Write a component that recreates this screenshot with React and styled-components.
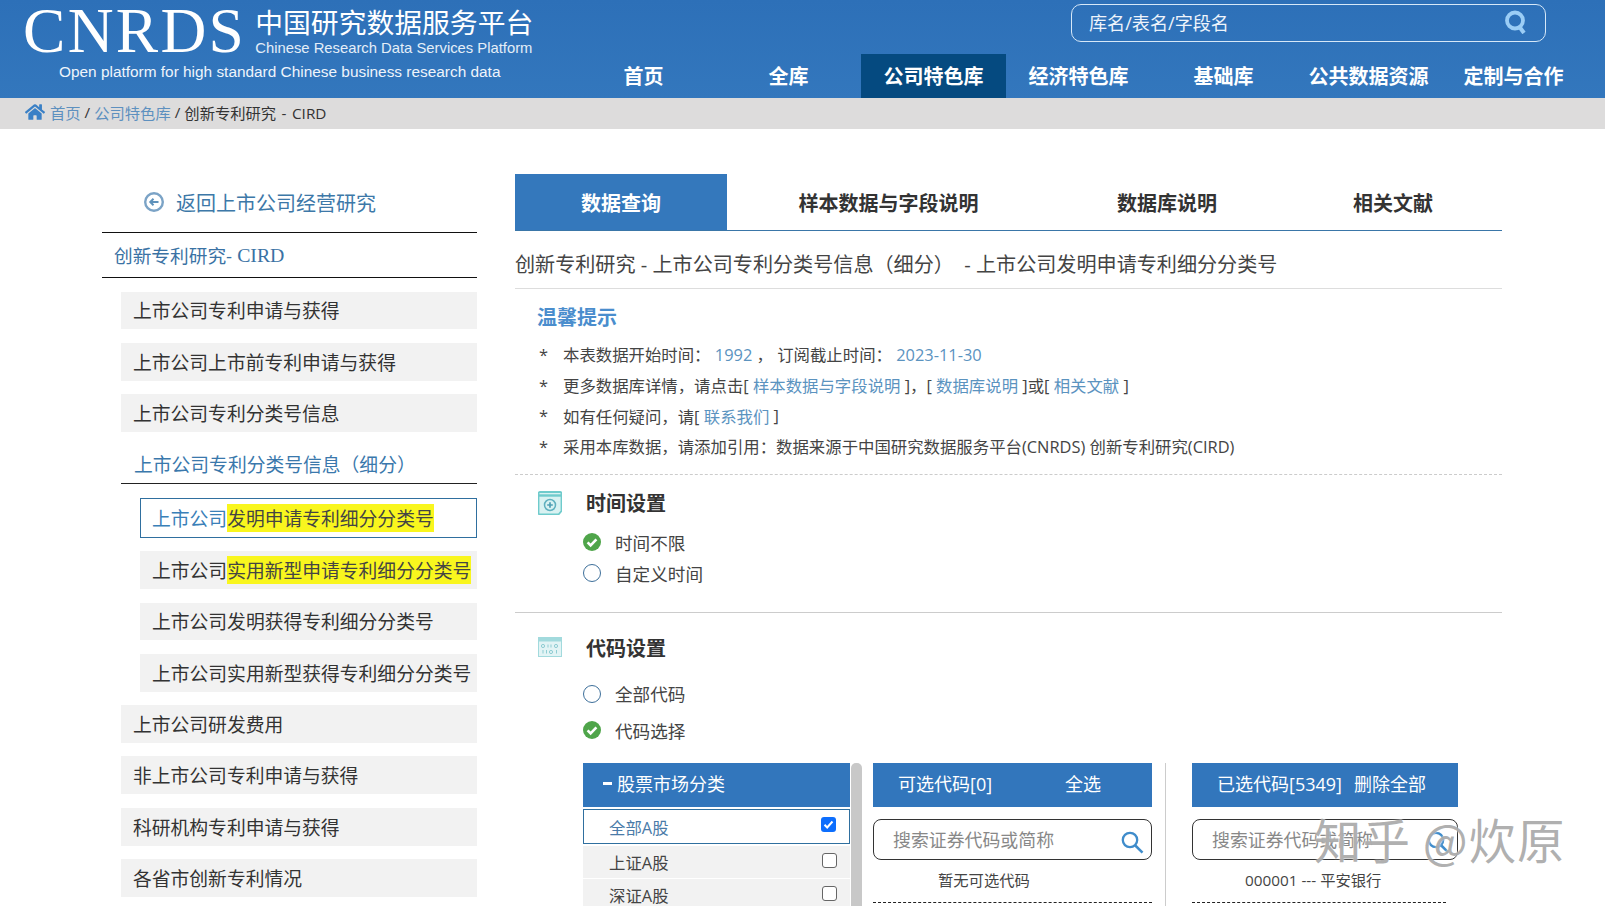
import React from "react";
import styled, { createGlobalStyle } from "styled-components";
import { FaHome } from "react-icons/fa";

const Global = createGlobalStyle`
  html, body { margin: 0; padding: 0; background: #fff; overflow: hidden; }
  body { font-family: "Open Sans", "Noto Sans CJK SC", sans-serif; color: #333; }
  #root { width: 1605px; height: 906px; overflow: hidden; position: relative; }
  * { box-sizing: border-box; }
`;

const Header = styled.header`
  height: 98px; display: flex; background: linear-gradient(#2d70b8, #3377bd); color: #fff;
`;
const Brand = styled.div`
  width: 571px; padding: 0 0 0 23px; font-family: "Liberation Sans", "Noto Sans CJK SC", sans-serif;
`;
const BrandTop = styled.div` display: flex; gap: 9px; height: 60px; `;
const Logo = styled.div`
  font-family: "Liberation Serif", serif; font-size: 63.5px; line-height: 62px; letter-spacing: 2.3px;
`;
const BrandNames = styled.div` display: flex; flex-direction: column; padding-top: 2px; `;
const BrandCn = styled.div`
  font-family: "Noto Sans CJK SC", sans-serif; font-size: 27.8px; line-height: 38px; white-space: nowrap; font-weight: 400;
`;
const BrandEn = styled.div` font-size: 14.8px; line-height: 17px; color: #e4eef8; white-space: nowrap; `;
const Tagline = styled.div` font-size: 15.4px; line-height: 20px; margin: 1.5px 0 0 36px; color: #eef4fb; white-space: nowrap; `;
const HeaderRight = styled.div` flex: 1; display: flex; flex-direction: column; justify-content: space-between; padding-top: 4px; `;
const SearchBox = styled.div`
  width: 475px; height: 38px; margin-left: 500px; border: 1px solid #d6e8f8; border-radius: 10px;
  display: flex; align-items: center; justify-content: space-between; padding: 0 16px 3px 17px;
  font-size: 18.1px; color: #eef4fb;
`;
const Nav = styled.nav` display: flex; height: 44px; `;
const NavItem = styled.div`
  width: 145px; display: flex; align-items: center; justify-content: center; font-size: 20px; font-weight: 700; padding-bottom: 2px;
  background: ${p => (p.$active ? "#054a80" : "transparent")};
`;

const Crumbs = styled.div`
  height: 31px; background: #dddcdc; display: flex; align-items: center; padding: 0 0 3px 25px; font-size: 15.3px; word-spacing: 1.5px; color: #333; white-space: pre;
`;
const HomeIcon = styled(FaHome)` width: 20px; height: 18px; color: #3a80c6; margin-right: 5px; `;
const CrumbLink = styled.span` color: #5d90bf; `;
const Sep = styled.span` margin: 0 4px; `;

const Main = styled.main` display: flex; padding: 45px 0 0 102px; `;
const Side = styled.aside` width: 375px; flex: none; `;
const Back = styled.div`
  height: 59px; display: flex; align-items: center; gap: 12px; padding: 0 0 2px 42px; font-size: 20px; color: #3d78a8;
  border-bottom: 1px solid #111;
`;
const SideTitle = styled.div`
  height: 45px; display: flex; align-items: center; padding: 0 0 2px 12px; font-size: 18.7px; color: #3a72a4;
  border-bottom: 1px solid #111; margin-bottom: 13.5px;
`;
const SerifBit = styled.span` font-family: "Liberation Serif", serif; margin-left: 5px; padding-top: 2px; font-size: 19.8px; `;
const Row = styled.div`
  height: 37.8px; margin: 0 0 13.5px 19px; padding: 0 0 0 12px;
  background: #f2f2f2; display: flex; align-items: center; font-size: 18.8px; color: #333; white-space: nowrap;
`;
const SubRow = styled(Row)` margin-left: 38px; `;
const ActiveSub = styled(SubRow)`
  height: 40px; background: #fff; border: 1px solid #2f6f9f; padding-left: 11px; color: #3a80b8;
`;
const OpenHead = styled.div`
  height: 38.4px; margin: 0 0 14px 19px; padding-left: 13px; border-bottom: 1px solid #222; display: flex; align-items: center;
  font-size: 18.8px; color: #3a78ac;
`;
const Mark = styled.span` background: #f9f61e; color: #444; `;

const Content = styled.section` width: 987px; margin-left: 38px; flex: none; `;
const Tabs = styled.div` display: flex; height: 57px; border-bottom: 1.5px solid #3a76a8; `;
const Tab = styled.div`
  width: ${p => p.$w}px; display: flex; align-items: center; justify-content: center; font-size: 20px; font-weight: 700;
  background: ${p => (p.$active ? "#3478bc" : "transparent")}; color: ${p => (p.$active ? "#fff" : "#333")};
`;
const PageTitle = styled.h1`
  margin: 0; height: 58px; display: flex; align-items: center; font-size: 20.1px; font-weight: 400; color: #444; white-space: pre;
  border-bottom: 1px solid #ddd; padding-top: 8px;
`;
const Tips = styled.div` padding: 14px 0 12.2px 22px; border-bottom: 1px dashed #ccc; `;
const TipTitle = styled.h3` margin: 0 0 6px; font-size: 20px; line-height: 30px; font-weight: 700; color: #4a8dcd; `;
const TipLine = styled.div`
  height: 30.7px; display: flex; align-items: center; font-size: 16.4px; color: #444; white-space: pre;
`;
const Star = styled.span` width: 26px; padding-left: 2px; color: #444; `;
const TipLink = styled.span` color: #5b93bf; `;

const Block = styled.div` padding: ${p => p.$top}px 0 ${p => p.$bottom}px 23px; border-bottom: ${p => (p.$line ? "1px solid #ccc" : "none")}; `;
const BlockHead = styled.div` display: flex; align-items: center; gap: 24px; height: 30px; margin-bottom: ${p => p.$gap}px; `;
const BlockTitle = styled.h3` margin: 0; font-size: 20px; font-weight: 700; color: #333; `;
const Radio = styled.div`
  display: flex; align-items: center; gap: 14px; height: ${p => p.$h}px; padding-left: 45px; font-size: 17.6px; color: #444;
`;
const Ring = styled.span` width: 18px; height: 18px; border-radius: 50%; border: 1.5px solid #3d6f9a; flex: none; `;

const Panels = styled.div` display: flex; margin: 15px 0 0 45px; align-items: stretch; `;
const LeftPanel = styled.div` width: 267px; flex: none; `;
const PanelHead = styled.div`
  height: 44px; background: #3276bc; color: #fff; display: flex; align-items: center; font-size: 18px; padding: 0 0 4px ${p => p.$pl}px; gap: ${p => p.$gap || 0}px; white-space: nowrap;
`;
const Dash = styled.span` width: 9px; height: 2.5px; background: #fff; margin-right: 5px; `;
const Market = styled.div`
  height: ${p => p.$h}px; margin-top: ${p => p.$mt}px; display: flex; align-items: center; justify-content: space-between; padding: 0 13px 0 ${p => (p.$on ? 25 : 26)}px;
  background: ${p => (p.$on ? "#fff" : "#f2f2f2")}; border: ${p => (p.$on ? "1px solid #2f6f9f" : "none")};
  font-size: 16.4px; color: ${p => (p.$on ? "#4a7ba8" : "#444")};
`;
const Box = styled.span`
  width: 15px; height: 15px; border-radius: 3px; flex: none; display: flex; align-items: center; justify-content: center;
  background: ${p => (p.$on ? "#0d6efd" : "#fff")}; border: ${p => (p.$on ? "none" : "1px solid #666")}; margin-bottom: 4px;
`;
const Scroll = styled.div` width: 11px; margin: 0 11px 0 1px; background: #c8c8c8; border-radius: 5px 5px 0 0; flex: none; `;
const CodePanel = styled.div` width: ${p => p.$w}px; flex: none; `;
const CodeSearch = styled.div`
  height: 41px; margin-top: 12px; border: 1px solid #333; border-radius: 8px; display: flex; align-items: center; justify-content: space-between;
  padding: 0 7px 2px ${p => p.$pl}px; font-size: 17.9px; color: #888; background: #fff;
`;
const CodeItem = styled.div`
  height: 43px; display: flex; align-items: center; font-size: 15.3px; color: #444; padding: 0 0 4px ${p => p.$pl}px; width: ${p => p.$w}px; border-bottom: 1px dashed #222;
`;
const VLine = styled.div` width: 1px; background: #ccc; margin: 0 26px 0 13px; flex: none; `;
const Watermark = styled.div`
  position: absolute; left: 1314px; top: 805px; font-size: 47.5px; line-height: 68px; color: rgba(150,150,150,.75); white-space: pre;
  letter-spacing: 1px; font-family: "Noto Sans CJK SC", sans-serif; text-shadow: 0 0 2px #fff;
`;

const Check = () => (
  <svg width="18" height="18" viewBox="0 0 18 18" style={{ flex: "none" }}>
    <circle cx="9" cy="9" r="9" fill="#4fa54a" />
    <path d="M4.6 9.3l3 3 5.8-6" fill="none" stroke="#fff" strokeWidth="2.6" />
  </svg>
);
const BackIcon = () => (
  <svg width="20" height="20" viewBox="0 0 20 20">
    <circle cx="10" cy="10" r="8.8" fill="none" stroke="#7ba3c6" strokeWidth="2.4" />
    <path d="M14.5 10H6.5M9.5 6.8L6.3 10l3.2 3.2" fill="none" stroke="#5f92bb" strokeWidth="2" />
  </svg>
);
const CalIcon = () => (
  <svg width="24" height="24" viewBox="0 0 24 24" style={{ flex: "none" }}>
    <path d="M2 1h20a1.5 1.5 0 0 1 1.5 1.5V20l-3 3.5H2A1.5 1.5 0 0 1 .5 22V2.5A1.5 1.5 0 0 1 2 1z" fill="#d9f2f2" stroke="#6fcbcc" strokeWidth="1.8" />
    <path d="M1 4.5h22" stroke="#6fcbcc" strokeWidth="2.4" />
    <circle cx="12" cy="14" r="5.5" fill="none" stroke="#5fb0bf" strokeWidth="1.5" />
    <path d="M12 11.2v5.6M9.2 14h5.6" stroke="#4f9fb4" strokeWidth="1.7" />
  </svg>
);
const CodeIcon = () => (
  <svg width="24" height="20" viewBox="0 0 24 20" style={{ flex: "none" }}>
    <rect x=".5" y=".5" width="23" height="19" fill="#e2f4f5" stroke="#a2dadd" />
    <rect x=".5" y=".5" width="23" height="4" fill="#a2dadd" />
    <g fill="none" stroke="#8fcdd3" strokeWidth="1">
      <circle cx="5" cy="9" r="1.6" /><path d="M10 7.5v3M13 7.5v3" /><circle cx="18" cy="9" r="1.6" />
      <path d="M5 13v3.5M8.5 13v3.5" /><circle cx="13" cy="15" r="1.6" /><path d="M18.5 13v3.5" />
    </g>
  </svg>
);
const TopSearch = () => (
  <svg width="26" height="24" viewBox="0 0 26 24">
    <circle cx="12" cy="10.5" r="8" fill="none" stroke="#9bcdf5" strokeWidth="3.8" />
    <path d="M16.5 17l4.5 6" stroke="#9bcdf5" strokeWidth="4" />
  </svg>
);
const BlueSearch = () => (
  <svg width="23" height="23" viewBox="0 0 23 23" style={{ flex: "none", marginTop: 8 }}>
    <circle cx="9" cy="9" r="7.2" fill="none" stroke="#3f8ccb" strokeWidth="2.3" />
    <path d="M14.3 14.5l7.2 7.2" stroke="#3f8ccb" strokeWidth="2.5" />
  </svg>
);
const Tick = () => (
  <svg width="11" height="11" viewBox="0 0 11 11"><path d="M1.5 5.8l2.7 2.7 5.3-6" fill="none" stroke="#fff" strokeWidth="2" /></svg>
);

const navs = ["首页", "全库", "公司特色库", "经济特色库", "基础库", "公共数据资源", "定制与合作"];
const tabs = [["数据查询", 212], ["样本数据与字段说明", 323], ["数据库说明", 234], ["相关文献", 218]];

export default function App() {
  return (
    <>
      <Global />
      <Header>
        <Brand>
          <BrandTop>
            <Logo>CNRDS</Logo>
            <BrandNames>
              <BrandCn>中国研究数据服务平台</BrandCn>
              <BrandEn>Chinese Research Data Services Platform</BrandEn>
            </BrandNames>
          </BrandTop>
          <Tagline>Open platform for high standard Chinese business research data</Tagline>
        </Brand>
        <HeaderRight>
          <SearchBox>库名/表名/字段名<TopSearch /></SearchBox>
          <Nav>
            {navs.map((n, i) => <NavItem key={n} $active={i === 2}>{n}</NavItem>)}
          </Nav>
        </HeaderRight>
      </Header>
      <Crumbs>
        <HomeIcon /><CrumbLink>首页</CrumbLink><Sep>/</Sep><CrumbLink>公司特色库</CrumbLink><Sep>/</Sep>创新专利研究 - CIRD
      </Crumbs>
      <Main>
        <Side>
          <Back><BackIcon />返回上市公司经营研究</Back>
          <SideTitle>创新专利研究-<SerifBit>CIRD</SerifBit></SideTitle>
          <Row>上市公司专利申请与获得</Row>
          <Row>上市公司上市前专利申请与获得</Row>
          <Row>上市公司专利分类号信息</Row>
          <OpenHead>上市公司专利分类号信息（细分）</OpenHead>
          <ActiveSub>上市公司<Mark>发明申请专利细分分类号</Mark></ActiveSub>
          <SubRow>上市公司<Mark>实用新型申请专利细分分类号</Mark></SubRow>
          <SubRow>上市公司发明获得专利细分分类号</SubRow>
          <SubRow>上市公司实用新型获得专利细分分类号</SubRow>
          <Row>上市公司研发费用</Row>
          <Row>非上市公司专利申请与获得</Row>
          <Row>科研机构专利申请与获得</Row>
          <Row>各省市创新专利情况</Row>
        </Side>
        <Content>
          <Tabs>
            {tabs.map(([t, w], i) => <Tab key={t} $w={w} $active={i === 0}>{t}</Tab>)}
          </Tabs>
          <PageTitle>创新专利研究 - 上市公司专利分类号信息（细分）  - 上市公司发明申请专利细分分类号</PageTitle>
          <Tips>
            <TipTitle>温馨提示</TipTitle>
            <TipLine><Star>*</Star>本表数据开始时间：<TipLink> 1992 </TipLink>， 订阅截止时间：<TipLink> 2023-11-30</TipLink></TipLine>
            <TipLine><Star>*</Star>更多数据库详情，请点击[ <TipLink>样本数据与字段说明</TipLink> ]，[ <TipLink>数据库说明</TipLink> ]或[ <TipLink>相关文献</TipLink> ]</TipLine>
            <TipLine><Star>*</Star>如有任何疑问，请[ <TipLink>联系我们</TipLink> ]</TipLine>
            <TipLine><Star>*</Star>采用本库数据，请添加引用：数据来源于中国研究数据服务平台(CNRDS) 创新专利研究(CIRD)</TipLine>
          </Tips>
          <Block $top={13} $bottom={23.4} $line>
            <BlockHead $gap={9}><CalIcon /><BlockTitle>时间设置</BlockTitle></BlockHead>
            <Radio $h={31}><Check />时间不限</Radio>
            <Radio $h={31}><Ring />自定义时间</Radio>
          </Block>
          <Block $top={19} $bottom={0}>
            <BlockHead $gap={13}><CodeIcon /><BlockTitle>代码设置</BlockTitle></BlockHead>
            <Radio $h={36.5}><Ring />全部代码</Radio>
            <Radio $h={36.5}><Check />代码选择</Radio>
            <Panels>
              <LeftPanel>
                <PanelHead $pl={20}><Dash />股票市场分类</PanelHead>
                <Market $on $h={35} $mt={2}>全部A股<Box $on><Tick /></Box></Market>
                <Market $h={32} $mt={2}>上证A股<Box /></Market>
                <Market $h={32} $mt={1}>深证A股<Box /></Market>
              </LeftPanel>
              <Scroll />
              <CodePanel $w={279}>
                <PanelHead $pl={25} $gap={73}><span>可选代码[0]</span><span>全选</span></PanelHead>
                <CodeSearch $pl={19}>搜索证券代码或简称<BlueSearch /></CodeSearch>
                <CodeItem $pl={65} $w={279}>暂无可选代码</CodeItem>
              </CodePanel>
              <VLine />
              <CodePanel $w={266}>
                <PanelHead $pl={25} $gap={12}><span>已选代码[5349]</span><span>删除全部</span></PanelHead>
                <CodeSearch $pl={19}>搜索证券代码或简称<BlueSearch /></CodeSearch>
                <CodeItem $pl={53} $w={254}>000001 --- 平安银行</CodeItem>
              </CodePanel>
            </Panels>
          </Block>
        </Content>
      </Main>
      <Watermark>知乎 @炊原</Watermark>
    </>
  );
}
